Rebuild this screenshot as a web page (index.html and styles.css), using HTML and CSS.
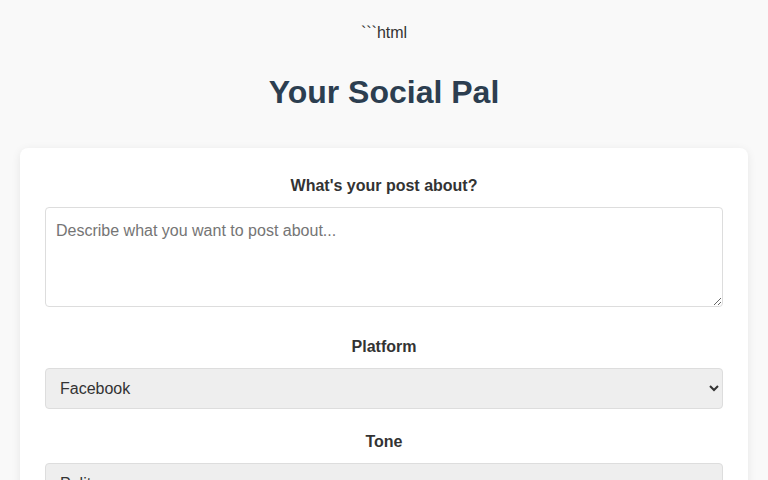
FILE: index.html
```html
<!DOCTYPE html>
<html lang="en">
<head>
<meta charset="utf-8">
<title>Your Social Pal</title>
<link rel="stylesheet" href="styles.css">
</head>
<body>
<p class="raw">```html</p>
<h1 class="title">Your Social Pal</h1>
<div class="card">
  <div class="group">
    <label class="label" for="topic">What's your post about?</label>
    <textarea id="topic" class="field area" placeholder="Describe what you want to post about..."></textarea>
  </div>
  <div class="group">
    <label class="label" for="platform">Platform</label>
    <select id="platform" class="field sel">
      <option>Facebook</option>
      <option>Twitter</option>
      <option>Instagram</option>
      <option>LinkedIn</option>
    </select>
  </div>
  <div class="group">
    <label class="label" for="tone">Tone</label>
    <select id="tone" class="field sel">
      <option>Polite</option>
      <option>Casual</option>
      <option>Funny</option>
    </select>
  </div>
</div>
</body>
</html>
```
FILE: styles.css
```css
html, body {
  background: #f9f9f9;
}
body {
  margin: 0;
  padding: 24px 20px 20px;
  font-family: "Liberation Sans", Arial, sans-serif;
  color: #333;
  text-align: center;
}
.raw {
  margin: 0;
  font-size: 16px;
  line-height: 18px;
  color: #333;
}
.title {
  margin: 32px 0 37px;
  font-size: 32px;
  line-height: 37px;
  font-weight: 700;
  color: #2c3e50;
}
.card {
  background: #fff;
  border-radius: 8px;
  box-shadow: 0 2px 10px rgba(0, 0, 0, 0.08);
  padding: 28px 25px;
  text-align: left;
}
.group {
  margin-bottom: 23px;
}
.label {
  display: block;
  text-align: center;
  font-weight: 700;
  font-size: 16px;
  line-height: 20px;
  margin-bottom: 11px;
  color: #333;
}
.field {
  display: block;
  width: 100%;
  box-sizing: border-box;
  border: 1px solid #ddd;
  border-radius: 4px;
  font-family: "Liberation Sans", Arial, sans-serif;
  font-size: 16px;
  color: #333;
  margin: 0;
}
.area {
  height: 100px;
  padding: 10px;
  line-height: 26px;
  resize: vertical;
  background: #fff;
  margin-bottom: 30px;
}
.group:first-child {
  margin-bottom: 0;
}
.area::placeholder {
  color: #757575;
}
.sel {
  height: 41px;
  padding: 10px;
  background-color: #eee;
}
```
